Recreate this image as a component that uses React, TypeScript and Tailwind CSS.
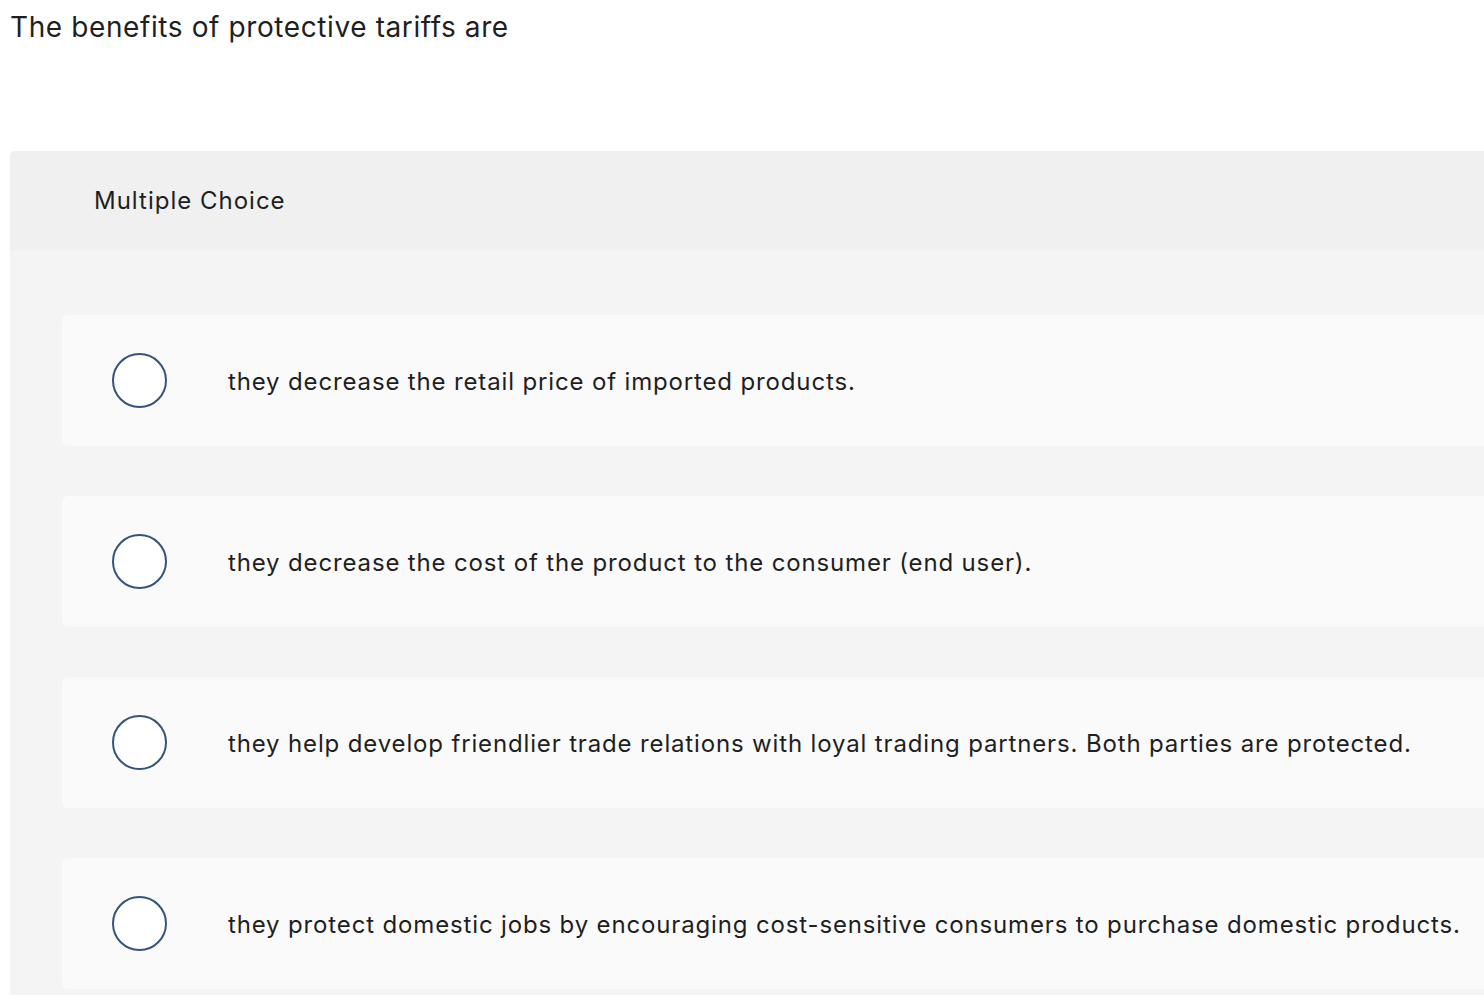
const options = [
  'they decrease the retail price of imported products.',
  'they decrease the cost of the product to the consumer (end user).',
  'they help develop friendlier trade relations with loyal trading partners. Both parties are protected.',
  'they protect domestic jobs by encouraging cost-sensitive consumers to purchase domestic products.',
]

function Radio() {
  return <div className="h-[55px] w-[55px] shrink-0 rounded-full border-2 border-[#34547d] bg-white" />
}

export default function App() {
  return (
    <div className="min-h-[996px] w-full overflow-hidden bg-white text-[#1f1f1f] [font-family:Inter,'Noto_Sans',sans-serif]">
      <h1 className="pl-[10px] pt-[8px] text-[28px] leading-[38px] font-normal tracking-[0.6px]">
        The benefits of protective tariffs are
      </h1>
      <div className="ml-[10px] mt-[105px] w-[1520px] rounded-tl-[5px] bg-[#f4f4f4]">
        <div className="flex h-[100px] items-center rounded-tl-[5px] bg-[#f0f0f0] pl-[84px] text-[24px] tracking-[1px]">
          Multiple Choice
        </div>
        <div className="flex flex-col gap-[50px] pb-[6px] pl-[52px] pt-[64px]">
          {options.map((text) => (
            <div key={text} className="flex h-[131px] items-center rounded-[6px] bg-[#fafafa] pl-[50px]">
              <Radio />
              <span className="whitespace-nowrap pl-[61px] pt-[2px] text-[24px] tracking-[0.85px]">{text}</span>
            </div>
          ))}
        </div>
      </div>
    </div>
  )
}
